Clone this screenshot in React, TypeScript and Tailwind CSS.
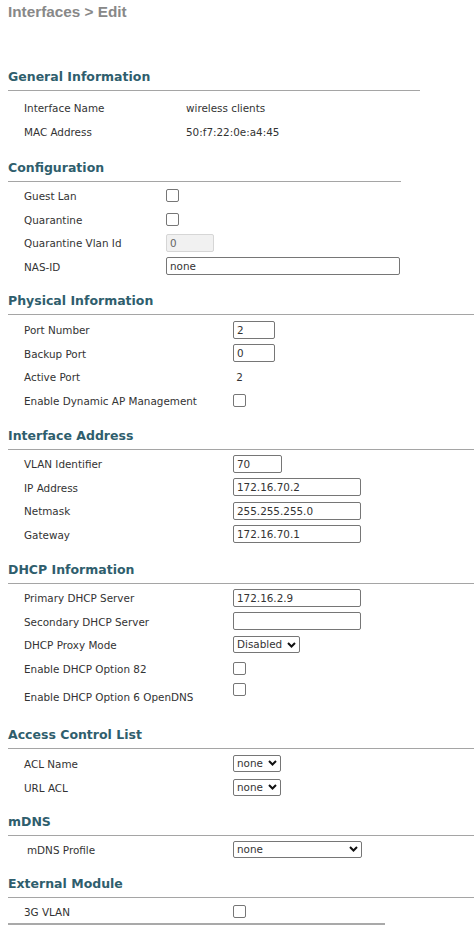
import type { ReactNode } from 'react'

const labelFont = "font-['DejaVu_Sans',Verdana,sans-serif] text-[10.4px] text-[#333]"

function Chevron() {
  return (
    <svg className="pointer-events-none absolute right-[4px] top-1/2 -translate-y-1/2" width="9" height="7" viewBox="0 0 9 7">
      <path d="M1 1.5 L4.5 5 L8 1.5" fill="none" stroke="#111" strokeWidth="2" />
    </svg>
  )
}

function Select({ value, width }: { value: string; width: string }) {
  return (
    <div className={`relative h-[17px] ${width}`}>
      <select
        defaultValue={value}
        className={`block h-full w-full appearance-none rounded-[2px] border border-[#767676] bg-white pl-[3px] leading-[15px] ${labelFont}`}
      >
        <option>{value}</option>
      </select>
      <Chevron />
    </div>
  )
}

function TextInput({ value = '', width, disabled = false }: { value?: string; width: string; disabled?: boolean }) {
  return (
    <input
      readOnly
      value={value}
      className={`block h-[18px] ${width} rounded-[2px] border px-[3px] outline-none ${labelFont} ${
        disabled ? 'border-[#d6d6d6] bg-[#f1f1f1] !text-[#666]' : 'border-[#767676] bg-white'
      }`}
    />
  )
}

function Check() {
  return <input type="checkbox" className="m-0 block h-[13px] w-[13px] appearance-none rounded-[2px] border border-[#767676] bg-white" />
}

function Row({ label, children, col, pitch = 'h-[23.5px]' }: { label: string; children?: ReactNode; col: string; pitch?: string }) {
  return (
    <div className={`flex ${pitch} items-center pl-[16px]`}>
      <div className={`${col} shrink-0 pt-[1px] leading-[16px] ${labelFont}`}>{label}</div>
      {children}
    </div>
  )
}

function Value({ children }: { children: ReactNode }) {
  return <span className={`pt-[1px] leading-[16px] ${labelFont}`}>{children}</span>
}

function Header({ title, line = 'w-full' }: { title: string; line?: string }) {
  return (
    <div className={`${line} border-b border-[#a5a5a5] pb-[3px]`}>
      <h2 className="font-['DejaVu_Sans',Verdana,sans-serif] text-[12.5px] font-bold leading-[20px] text-[#2f5e6d]">
        {title}
      </h2>
    </div>
  )
}

function Section({ title, line, pt, mb, children }: { title: string; line?: string; pt: string; mb: string; children: ReactNode }) {
  return (
    <div className={mb}>
      <Header title={title} line={line} />
      <div className={pt}>{children}</div>
    </div>
  )
}

export default function App() {
  const c1 = 'w-[162px]'
  const c2 = 'w-[142px]'
  const c3 = 'w-[209px]'
  return (
    <div className="min-h-[925px] w-[474px] overflow-hidden bg-white pl-[8px]">
      <h1 className="font-['Liberation_Sans',Arial,sans-serif] text-[15.3px] font-bold leading-[24px] text-[#888]">
        Interfaces &gt; Edit
      </h1>
      <div className="mt-[43px]">
        <Section title="General Information" line="w-[412px]" pt="pt-[4px]" mb="mb-[15px]">
          <Row label="Interface Name" col={c1} pitch="h-[24px]">
            <Value>wireless clients</Value>
          </Row>
          <Row label="MAC Address" col={c1} pitch="h-[24px]">
            <Value>50:f7:22:0e:a4:45</Value>
          </Row>
        </Section>

        <Section title="Configuration" line="w-[393px]" pt="pt-[2px]" mb="mb-[13px]">
          <Row label="Guest Lan" col={c2}><Check /></Row>
          <Row label="Quarantine" col={c2}><Check /></Row>
          <Row label="Quarantine Vlan Id" col={c2}><TextInput value="0" width="w-[48px]" disabled /></Row>
          <Row label="NAS-ID" col={c2}><TextInput value="none" width="w-[234px]" /></Row>
        </Section>

        <Section title="Physical Information" pt="pt-[3px]" mb="mb-[14px]">
          <Row label="Port Number" col={c3}><TextInput value="2" width="w-[42px]" /></Row>
          <Row label="Backup Port" col={c3}><TextInput value="0" width="w-[42px]" /></Row>
          <Row label="Active Port" col={c3}><Value>&nbsp;2</Value></Row>
          <Row label="Enable Dynamic AP Management" col={c3}><Check /></Row>
        </Section>

        <Section title="Interface Address" pt="pt-[2px]" mb="mb-[14px]">
          <Row label="VLAN Identifier" col={c3}><TextInput value="70" width="w-[49px]" /></Row>
          <Row label="IP Address" col={c3}><TextInput value="172.16.70.2" width="w-[128px]" /></Row>
          <Row label="Netmask" col={c3}><TextInput value="255.255.255.0" width="w-[128px]" /></Row>
          <Row label="Gateway" col={c3}><TextInput value="172.16.70.1" width="w-[128px]" /></Row>
        </Section>

        <Section title="DHCP Information" pt="pt-[2px]" mb="mb-[15px]">
          <Row label="Primary DHCP Server" col={c3}><TextInput value="172.16.2.9" width="w-[128px]" /></Row>
          <Row label="Secondary DHCP Server" col={c3}><TextInput width="w-[128px]" /></Row>
          <Row label="DHCP Proxy Mode" col={c3}><Select value="Disabled" width="w-[67px]" /></Row>
          <Row label="Enable DHCP Option 82" col={c3}><Check /></Row>
          <div className="flex h-[30px] items-start pl-[16px]">
            <div className={`${c3} shrink-0 pt-[9px] leading-[16px] ${labelFont}`}>Enable DHCP Option 6 OpenDNS</div>
            <div className="mt-[3px]"><Check /></div>
          </div>
        </Section>

        <Section title="Access Control List" pt="pt-[2px]" mb="mb-[13px]">
          <Row label="ACL Name" col={c3} pitch="h-[24px]"><Select value="none" width="w-[48px]" /></Row>
          <Row label="URL ACL" col={c3} pitch="h-[24px]"><Select value="none" width="w-[48px]" /></Row>
        </Section>

        <Section title="mDNS" pt="pt-[1px]" mb="mb-[13px]">
          <Row label="mDNS Profile" col="w-[209px] pl-[3px]" pitch="h-[24px]"><Select value="none" width="w-[129px]" /></Row>
        </Section>

        <div>
          <Header title="External Module" />
          <div className="w-[377px] border-b-[3px] border-[#a9a9a9] pt-[1px]">
            <Row label="3G VLAN" col={c3} pitch="h-[24px]"><Check /></Row>
          </div>
        </div>
      </div>
    </div>
  )
}
